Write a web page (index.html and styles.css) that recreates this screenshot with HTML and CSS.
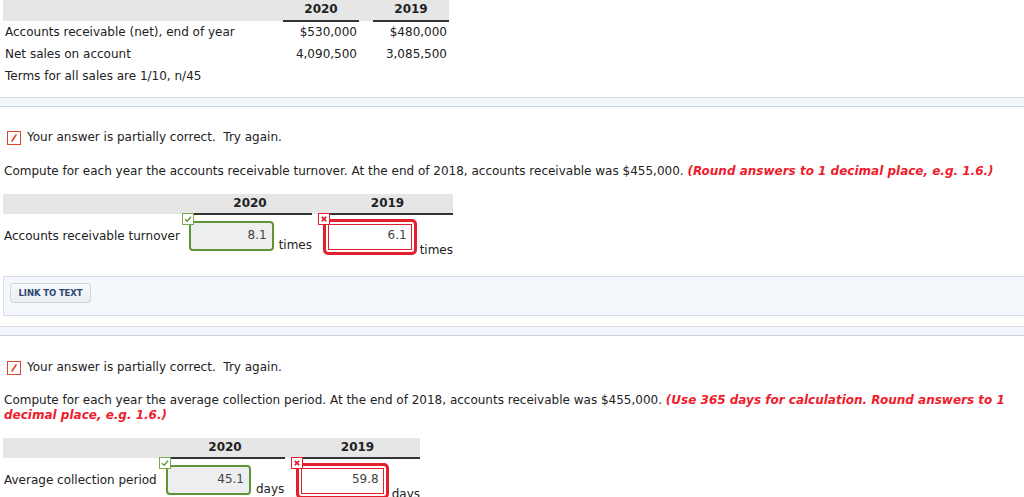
FILE: index.html
```html
<!DOCTYPE html>
<html>
<head>
<meta charset="utf-8">
<link rel="stylesheet" href="styles.css">
</head>
<body>
<div class="page">
  <div class="data-table">
    <div class="dt-head">
      <div class="dt-label"></div>
      <div class="dt-year">2020</div>
      <div class="dt-gap"></div>
      <div class="dt-year">2019</div>
    </div>
    <div class="dt-row">
      <div class="dt-label">Accounts receivable (net), end of year</div>
      <div class="dt-val">$530,000</div>
      <div class="dt-gap"></div>
      <div class="dt-val">$480,000</div>
    </div>
    <div class="dt-row">
      <div class="dt-label">Net sales on account</div>
      <div class="dt-val">4,090,500</div>
      <div class="dt-gap"></div>
      <div class="dt-val">3,085,500</div>
    </div>
    <div class="dt-row">
      <div class="dt-label">Terms for all sales are 1/10, n/45</div>
    </div>
  </div>

  <div class="band band-1"></div>

  <div class="section sec-1">
    <p class="status"><span class="partial-icon"><svg width="8" height="8" viewBox="0 0 8 8"><path d="M2 7 L6 1" stroke="#e0452b" stroke-width="1.6" stroke-linecap="round"/></svg></span>Your answer is partially correct.&nbsp; Try again.</p>
    <p class="question">Compute for each year the accounts receivable turnover. At the end of 2018, accounts receivable was $455,000. <em class="hint">(Round answers to 1 decimal place, e.g. 1.6.)</em></p>
    <div class="ans-table at-1">
      <div class="at-head">
        <div class="at-label"></div>
        <div class="at-year">2020</div>
        <div class="at-gap"></div>
        <div class="at-year">2019</div>
      </div>
      <div class="at-row">
        <div class="at-label">Accounts receivable turnover</div>
        <div class="at-cell">
          <span class="badge badge-ok"><svg width="10" height="10" viewBox="0 0 10 10"><path d="M2 5.2 L4.2 7.2 L8 2.8" fill="none" stroke="#5f9a32" stroke-width="1.4"/></svg></span>
          <div class="box box-ok">8.1</div>
          <span class="unit">times</span>
        </div>
        <div class="at-gap"></div>
        <div class="at-cell">
          <span class="badge badge-bad"><svg width="10" height="10" viewBox="0 0 10 10"><path d="M2.8 2.8 L7.2 7.2 M7.2 2.8 L2.8 7.2" stroke="#e3202e" stroke-width="1.8"/></svg></span>
          <div class="box box-bad">6.1</div>
          <span class="unit unit-low">times</span>
        </div>
      </div>
    </div>
  </div>

  <div class="link-panel">
    <span class="link-btn">LINK TO TEXT</span>
  </div>

  <div class="band band-2"></div>

  <div class="section sec-2">
    <p class="status"><span class="partial-icon"><svg width="8" height="8" viewBox="0 0 8 8"><path d="M2 7 L6 1" stroke="#e0452b" stroke-width="1.6" stroke-linecap="round"/></svg></span>Your answer is partially correct.&nbsp; Try again.</p>
    <p class="question">Compute for each year the average collection period. At the end of 2018, accounts receivable was $455,000. <em class="hint">(Use 365 days for calculation. Round answers to 1 decimal place, e.g. 1.6.)</em></p>
    <div class="ans-table at-2">
      <div class="at-head">
        <div class="at-label"></div>
        <div class="at-year">2020</div>
        <div class="at-gap"></div>
        <div class="at-year">2019</div>
      </div>
      <div class="at-row">
        <div class="at-label">Average collection period</div>
        <div class="at-cell">
          <span class="badge badge-ok"><svg width="10" height="10" viewBox="0 0 10 10"><path d="M2 5.2 L4.2 7.2 L8 2.8" fill="none" stroke="#5f9a32" stroke-width="1.4"/></svg></span>
          <div class="box box-ok">45.1</div>
          <span class="unit">days</span>
        </div>
        <div class="at-gap"></div>
        <div class="at-cell">
          <span class="badge badge-bad"><svg width="10" height="10" viewBox="0 0 10 10"><path d="M2.8 2.8 L7.2 7.2 M7.2 2.8 L2.8 7.2" stroke="#e3202e" stroke-width="1.8"/></svg></span>
          <div class="box box-bad">59.8</div>
          <span class="unit unit-low">days</span>
        </div>
      </div>
    </div>
  </div>
</div>
</body>
</html>
```

FILE: styles.css
```css
html, body {
  margin: 0;
  padding: 0;
  background: #ffffff;
}

body {
  font-family: "DejaVu Sans", Verdana, sans-serif;
  font-size: 12px;
  color: #222222;
  overflow: hidden;
  height: 497px;
}

.page {
  width: 1024px;
}

/* Top data table */
.data-table {
  margin-left: 3px;
  width: 446px;
}

.dt-head,
.dt-row {
  display: grid;
  grid-template-columns: 280px 76px 14px 76px;
}

.dt-head {
  background: #e6e6e6;
  height: 21px;
}

.dt-year {
  font-weight: bold;
  text-align: center;
  line-height: 19px;
  border-bottom: 2px solid #333333;
  background: #e6e6e6;
  box-sizing: border-box;
  height: 22px;
  margin-bottom: -1px;
}

.dt-row {
  height: 22px;
  line-height: 22px;
}

.dt-label {
  padding-left: 2px;
  white-space: nowrap;
}

.dt-val {
  text-align: right;
  padding-right: 2px;
}

/* Separator bands */
.band {
  height: 8px;
  background: #f3f6fa;
  border-top: 1px solid #d6dce4;
  border-bottom: 1px solid #c9d4e0;
}

.band-1 {
  margin-top: 10px;
}

.band-2 {
  margin-top: 10px;
}

/* Answer sections */
.section {
  padding-left: 4px;
}

.status {
  margin: 0;
  display: flex;
  align-items: center;
  line-height: 15px;
}

.sec-1 .status {
  margin-top: 23px;
}

.sec-2 .status {
  margin-top: 24px;
}

.partial-icon {
  display: inline-flex;
  align-items: center;
  justify-content: center;
  width: 12px;
  height: 12px;
  border: 1px solid #e0452b;
  margin-left: 3px;
  margin-right: 6px;
  background: #ffffff;
}

.question {
  margin: 19px 0 0 0;
  line-height: 15px;
  padding-right: 8px;
}

.sec-2 .question {
  margin-top: 18px;
}

.hint {
  color: #ee1c2c;
  font-weight: bold;
  font-style: italic;
}

/* Answer tables */
.ans-table {
  margin-left: -1px;
  margin-top: 15px;
  width: max-content;
}

.at-head,
.at-row {
  display: grid;
}

.at-1 .at-head,
.at-1 .at-row {
  grid-template-columns: 185px 124px 10px 131px;
}

.at-2 .at-head,
.at-2 .at-row {
  grid-template-columns: 162px 120px 10px 125px;
}

.at-head {
  background: #e6e6e6;
  height: 20px;
}

.at-year {
  font-weight: bold;
  text-align: center;
  line-height: 19px;
  border-bottom: 2px solid #333333;
  box-sizing: border-box;
  height: 21px;
}

.at-row {
  align-items: start;
  height: 45px;
}

.at-label {
  padding-left: 1px;
  white-space: nowrap;
}

.at-row .at-label {
  margin-top: 15px;
  line-height: 15px;
}

.at-cell {
  position: relative;
  display: flex;
  align-items: flex-end;
  padding-top: 5px;
}

.box {
  box-sizing: border-box;
  text-align: right;
  color: #444444;
  font-size: 12px;
}

.box-ok {
  width: 86px;
  height: 30px;
  margin-top: 2px;
  margin-left: 1px;
  border: 2px solid #5e9433;
  border-radius: 4px;
  background: #eceef0;
  line-height: 24px;
  padding-right: 5px;
  padding-bottom: 4px;
}

.box-bad {
  width: 94px;
  height: 36px;
  margin-left: 1px;
  border: 3px solid #e3202e;
  border-radius: 5px;
  background: #ffffff;
  box-shadow: inset 0 0 0 2px #ffffff, inset 0 0 0 3px #e3202e;
  line-height: 20px;
  padding: 3px 7px 0 0;
}

.at-2 .box-ok {
  width: 85px;
}

.at-2 .box-bad {
  width: 95px;
}

.unit {
  margin-left: 5px;
  line-height: 15px;
  margin-bottom: -2px;
}

.unit-low {
  margin-left: 3px;
  margin-bottom: -3px;
}

.badge {
  position: absolute;
  top: -1px;
  width: 12px;
  height: 12px;
  box-sizing: border-box;
  background: #ffffff;
  display: flex;
  align-items: center;
  justify-content: center;
}

.badge-ok {
  left: -6px;
  border: 1px solid #7aa84e;
}

.badge-bad {
  left: -4px;
  border: 1px solid #e3202e;
}

/* Link panel */
.link-panel {
  margin-left: 3px;
  margin-top: 17px;
  height: 40px;
  box-sizing: border-box;
  background: #f4f7fb;
  border: 1px solid #d6dce4;
  border-right: none;
  padding: 6px 0 0 6px;
}

.link-btn {
  display: inline-block;
  height: 20px;
  width: 81px;
  box-sizing: border-box;
  border: 1px solid #cfd6de;
  border-radius: 3px;
  background: linear-gradient(#f7f9fb, #e9edf2);
  color: #2d4673;
  font-weight: bold;
  font-size: 8.5px;
  line-height: 18px;
  text-align: center;
  letter-spacing: -0.1px;
}
```
